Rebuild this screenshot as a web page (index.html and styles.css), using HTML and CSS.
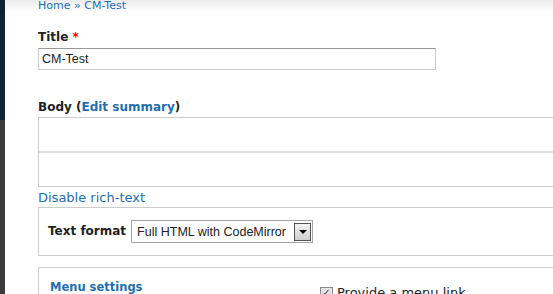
FILE: index.html
```html
<!DOCTYPE html>
<html lang="en">
<head>
    <meta charset="UTF-8">
    <title>Edit CM-Test</title>
    <link rel="stylesheet" href="styles.css">
</head>
<body>
    <div class="page">
        <div class="edge"></div>
        <div class="main">
            <div class="breadcrumb"><a href="#">Home</a> » <a href="#">CM-Test</a></div>

            <div class="field">
                <label class="label">Title <span class="req">*</span></label>
                <input class="text-input" type="text" value="CM-Test">
            </div>

            <div class="field body-field">
                <label class="label">Body (<a href="#">Edit summary</a>)</label>
                <div class="editor">
                    <div class="editor-cell"></div>
                    <div class="editor-cell"></div>
                </div>
                <a class="toggle" href="#">Disable rich-text</a>
            </div>

            <div class="format">
                <span class="label">Text format</span>
                <div class="select">
                    <span>Full HTML with CodeMirror</span>
                    <span class="select-btn"><span class="arrow"></span></span>
                </div>
            </div>

            <div class="menu-box">
                <a class="menu-title" href="#">Menu settings</a>
                <label class="check"><span class="checkbox">✓</span>Provide a menu link</label>
            </div>
        </div>
    </div>
</body>
</html>
```

FILE: styles.css
```css
body {
    margin: 0;
    font-family: "DejaVu Sans", Verdana, sans-serif;
    color: #333;
    background: #fff;
    overflow: hidden;
}
a {
    color: #1f6fae;
    text-decoration: none;
}
.page {
    display: flex;
    height: 294px;
    background: linear-gradient(#ececec, #fff 12px);
}
.edge {
    width: 5px;
    flex: none;
    background: linear-gradient(#0d2436 0, #0d2436 120px, #3b3b3b 120px);
}
.main {
    flex: none;
    width: 640px;
    padding-left: 33px;
}
.breadcrumb {
    font-size: 11px;
    line-height: 12px;
    color: #1f6fae;
}
.field {
    margin-top: 18px;
}
.label {
    display: block;
    font-size: 12px;
    font-weight: bold;
    line-height: 15px;
    color: #222;
}
.req {
    color: #e00;
}
.text-input {
    display: block;
    box-sizing: border-box;
    width: 398px;
    height: 22px;
    margin: 3px 0 0;
    padding: 0 3px;
    border: 1px solid #ccc;
    border-top-color: #999;
    font-family: "Liberation Sans", Arial, sans-serif;
    font-size: 12.5px;
    color: #222;
}
.body-field {
    margin-top: 30px;
}
.editor {
    margin-top: 2px;
    border: 1px solid #ccc;
}
.editor-cell {
    height: 33px;
}
.editor-cell + .editor-cell {
    border-top: 2px solid #ddd;
}
.toggle {
    display: block;
    margin-top: 3px;
    font-size: 13px;
    line-height: 16px;
}
.format {
    display: flex;
    align-items: center;
    gap: 5px;
    margin-top: 1px;
    height: 47px;
    padding-left: 9px;
    border: 1px solid #ccc;
}
.select {
    display: flex;
    align-items: center;
    justify-content: space-between;
    box-sizing: border-box;
    width: 182px;
    height: 23px;
    padding: 0 1px 0 5px;
    border: 1px solid #a5a5a5;
    font-family: "Liberation Sans", Arial, sans-serif;
    font-size: 12.5px;
    color: #222;
}
.select-btn {
    display: flex;
    align-items: center;
    justify-content: center;
    box-sizing: border-box;
    width: 17px;
    height: 18px;
    border: 1px solid #555;
    background: linear-gradient(#f2f2f2, #cfcfcf);
}
.arrow {
    width: 0;
    height: 0;
    border-left: 4px solid transparent;
    border-right: 4px solid transparent;
    border-top: 4px solid #000;
}
.menu-box {
    display: flex;
    align-items: flex-start;
    margin-top: 11px;
    height: 60px;
    padding: 12px 0 0 11px;
    border: 1px solid #ccc;
    border-bottom: 0;
}
.menu-title {
    width: 270px;
    flex: none;
    font-size: 11.5px;
    font-weight: bold;
    line-height: 15px;
}
.check {
    display: flex;
    align-items: center;
    gap: 4px;
    margin-top: 5px;
    font-size: 13px;
    line-height: 16px;
    color: #222;
}
.checkbox {
    display: inline-flex;
    align-items: center;
    justify-content: center;
    width: 11px;
    height: 11px;
    border: 1px solid #8a8a8a;
    background: #e4e4e4;
    font-size: 10px;
    color: #335;
}
```
